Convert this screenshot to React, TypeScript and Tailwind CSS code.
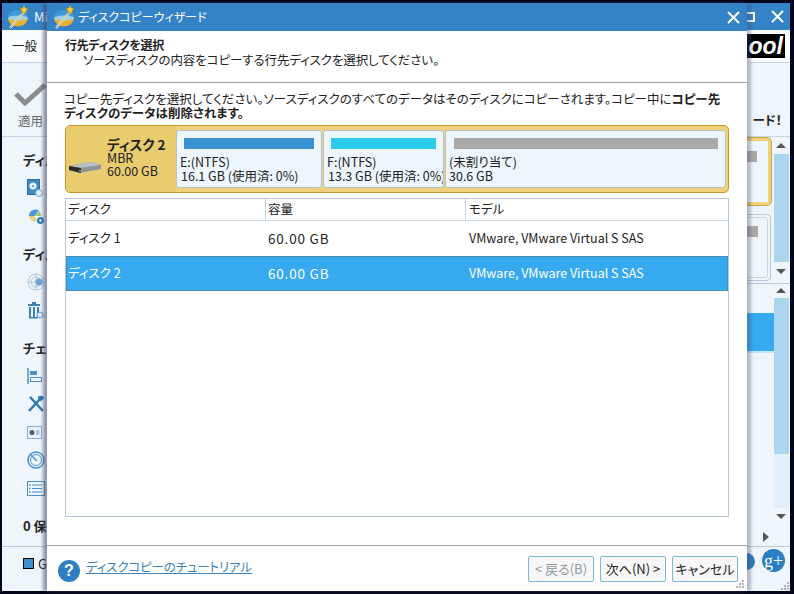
const jp = "font-['Noto_Sans_CJK_JP','Liberation_Sans',sans-serif] [font-feature-settings:'palt']";

function Wand() {
  return (
    <svg width="24" height="24" viewBox="0 0 24 24" className="shrink-0">
      <path d="M1 13a10 8 0 0 1 20 0z" fill="#3f9bd8" />
      <path d="M1 13a10 8.500 0 0 0 20 0z" fill="#e9b22c" />
      <path d="M1 13a10 2.500 0 0 1 20 0a10 2.500 0 0 1-20 0z" fill="#9fd0e8" />
      <path d="M3 23L17 7" stroke="#f4f0d8" strokeWidth="2" />
      <path d="M3 23L17 7" stroke="#7a6a30" strokeWidth="0.6" />
      <path d="M17 0l1.300 3 3 .8-2.400 2 .6 3-2.500-1.600-2.500 1.600.6-3-2.400-2 3-.8z" fill="#f5d23c" stroke="#9a7a10" strokeWidth="0.5" />
    </svg>
  );
}

function Hdd({ w = 34 }: { w?: number }) {
  return (
    <svg width={w} height="14" viewBox="0 0 34 14">
      <path d="M1 6L23 2L33 5V9L11 13L1 10Z" fill="#8d9396" />
      <path d="M1 6L11 8L33 5L23 2Z" fill="#b9bec0" />
      <path d="M1 6L13 8V13L1 10Z" fill="#2b2b2b" />
      <rect x="11" y="10" width="2" height="1.500" fill="#42c65a" />
    </svg>
  );
}

const Back = {
  Disk: () => (
    <svg width="16" height="18" viewBox="0 0 16 18">
      <rect x="0.500" y="0.500" width="12" height="15" fill="#3d87c4" stroke="#2b6ea8" />
      <circle cx="6" cy="7" r="3.600" fill="#e6f2fb" />
      <circle cx="6" cy="7" r="1" fill="#3d87c4" />
      <circle cx="12" cy="14" r="3.400" fill="#e7f2fa" stroke="#6aa7d6" />
    </svg>
  ),
  Pie: () => (
    <svg width="18" height="18" viewBox="0 0 18 18">
      <path d="M2 9a6.500 6.500 0 0 1 10-5.500L7.500 9z" fill="#4a95d6" />
      <path d="M2 9h5.500l3 5a6.500 6.500 0 0 1-8.500-5z" fill="#e7d27d" />
      <path d="M8 9l4.500-5 2 5z" fill="#9cc66b" />
      <circle cx="13.500" cy="13.500" r="3.500" fill="#2d7cc0" />
      <circle cx="13.500" cy="13.500" r="1.200" fill="#fff" />
    </svg>
  ),
  Globe: () => (
    <svg width="18" height="18" viewBox="0 0 18 18" fill="none" stroke="#a9c6de">
      <circle cx="9" cy="9" r="8" />
      <circle cx="9" cy="9" r="5" />
      <path d="M1 9h16M9 1v16" />
      <circle cx="12" cy="9" r="3.500" fill="#6ea5d2" stroke="none" />
    </svg>
  ),
  Trash: () => (
    <svg width="17" height="18" viewBox="0 0 17 18">
      <path d="M1 3h12v2H1zM5 1h4v2H5z" fill="#3b7fb8" />
      <path d="M2 6h2v10H2zM6 6h2v10H6zM10 6h2v7h-2zM2 16h9v1.500H2z" fill="#3b7fb8" />
      <circle cx="13" cy="14" r="3" fill="#dcebf7" stroke="#5a9bd0" />
    </svg>
  ),
  Align: () => (
    <svg width="15" height="16" viewBox="0 0 15 16" fill="none">
      <path d="M1 0v16" stroke="#4a8fc8" strokeWidth="1.500" />
      <rect x="3" y="3" width="7" height="4" fill="#4a8fc8" />
      <rect x="3.500" y="9.500" width="11" height="4" stroke="#4a8fc8" />
    </svg>
  ),
  Tools: () => (
    <svg width="18" height="18" viewBox="0 0 18 18" fill="none" stroke="#2f78b4" strokeWidth="2.500">
      <path d="M2 16L13 4" />
      <path d="M3 2l13 14" />
      <path d="M11 2a4 4 0 0 1 6 1l-3 3-2-1z" fill="#2f78b4" strokeWidth="0.500" />
    </svg>
  ),
  Card: () => (
    <svg width="15" height="13" viewBox="0 0 15 13">
      <rect x="0.500" y="0.500" width="14" height="12" fill="#eaf3fa" stroke="#7fb0d8" />
      <circle cx="5" cy="6.500" r="2.500" fill="#55585c" />
      <rect x="9" y="4" width="3.500" height="5" fill="#a9c6de" />
    </svg>
  ),
  Gauge: () => (
    <svg width="18" height="18" viewBox="0 0 18 18" fill="none" stroke="#4a8fc8">
      <circle cx="9" cy="9" r="8" strokeWidth="1.500" />
      <circle cx="9" cy="9" r="5.500" />
      <path d="M4 4l6 6" strokeWidth="1.500" />
    </svg>
  ),
  List: () => (
    <svg width="18" height="15" viewBox="0 0 18 15" fill="none" stroke="#4a8fc8">
      <rect x="0.500" y="0.500" width="17" height="14" />
      <path d="M5 4h10M5 7.500h10M5 11h10" />
      <path d="M2 4h1.500M2 7.500h1.500M2 11h1.500" strokeWidth="1.500" />
    </svg>
  ),
};

function Heading({ children, className = "" }: { children: string; className?: string }) {
  return (
    <div className={`h-7 flex items-center pl-[21px] text-[13px] font-bold text-[#222] whitespace-nowrap ${className}`}>{children}</div>
  );
}

function IconRow({ children }: { children: React.ReactNode }) {
  return <div className="h-7 flex items-center pl-[25px]">{children}</div>;
}

function Partition({ width, bar, barWidth, line1, line2, line2x }: { width: string; bar: string; barWidth: string; line1: string; line2: string; line2x: string }) {
  return (
    <div className={`${width} h-[58px] shrink-0 bg-[#edf6fc] border border-[#b7c3cc] rounded-[3px] pt-[7px] overflow-hidden text-[#222] text-[12.5px] leading-[13px] whitespace-nowrap`}>
      <div className={`${bar} ${barWidth} h-[11px] mx-auto`} />
      <div className="mt-[6px] pl-[3px]">{line1}</div>
      <div className={`${line2x} mt-px`}>{line2}</div>
    </div>
  );
}

function Btn({ children, disabled, width }: { children: string; disabled?: boolean; width: string }) {
  return (
    <button className={`${width} h-[26px] border border-[#7ab9d2] rounded-[2px] bg-[#f7f7f7] text-[13px] ${disabled ? "text-[#8f9aa1]" : "text-[#222]"}`}>
      {children}
    </button>
  );
}

function Grip() {
  return (
    <svg width="10" height="10" viewBox="0 0 10 10" fill="#b4b4b4">
      <rect x="7" y="1" width="2" height="2" />
      <rect x="4" y="4" width="2" height="2" />
      <rect x="7" y="4" width="2" height="2" />
      <rect x="1" y="7" width="2" height="2" />
      <rect x="4" y="7" width="2" height="2" />
      <rect x="7" y="7" width="2" height="2" />
    </svg>
  );
}

function Row({ cells, selected, height }: { cells: string[]; selected?: boolean; height: string }) {
  return (
    <div className={`flex ${height} items-center text-[12.5px] whitespace-nowrap ${selected ? "bg-[#36a9f0] text-white outline-1 outline-dotted outline-offset-[-1px] outline-[#5f6f7c]" : "text-[#222]"}`}>
      <div className="w-[200px] pl-[2px]">{cells[0]}</div>
      <div className="w-[200px] pl-[2px] text-[13.5px] tracking-[0.8px]">{cells[1]}</div>
      <div className="pl-[3px] flex-1">{cells[2]}</div>
    </div>
  );
}

function Arrow({ dir, className = "" }: { dir: "up" | "down"; className?: string }) {
  return (
    <div className={`flex justify-center pr-px ${className}`}>
      <div className={`w-0 h-0 border-l-[5px] border-r-[5px] border-l-transparent border-r-transparent ${dir === "up" ? "border-b-[5px] border-b-[#555]" : "border-t-[5px] border-t-[#555]"}`} />
    </div>
  );
}

export default function App() {
  return (
    <div className={`relative w-[794px] h-[594px] bg-[#02051a] overflow-hidden ${jp}`}>
      {/* back window */}
      <div className="absolute left-[2px] top-[3px] w-[788px] h-[588px] bg-[#eef6fc] flex flex-col overflow-hidden">
        <div className="h-[27px] shrink-0 bg-[#3483c7] flex items-center justify-between pl-[5px] pr-[5px] text-white">
          <div className="flex items-center gap-[3px] text-[13px]"><Wand /><span>Mi</span></div>
          <div className="flex items-center gap-[16px] pr-[1px]">
            <div className="w-[10px] h-[10px] border-2 border-white" />
            <svg width="13" height="13" viewBox="0 0 13 13" stroke="white" strokeWidth="2"><path d="M1 1l11 11M12 1L1 12" /></svg>
          </div>
        </div>
        <div className="h-[33px] shrink-0 bg-[#fafdff] border-b border-[#c5d7e6] flex items-center justify-between pl-[10px] pr-[5px] text-[12.5px] text-[#222]">
          <span>一般</span>
          <div className="bg-black text-white italic font-bold text-[23px] leading-[24px] w-[38px] text-right pr-[2px] font-['Liberation_Sans',sans-serif] overflow-hidden whitespace-nowrap">ool</div>
        </div>
        <div className="h-[74px] shrink-0 border-b border-[#c5d7e6] flex justify-between">
          <div className="pl-[12px] pt-[19px] flex flex-col">
            <svg width="33" height="24" viewBox="0 0 33 24" fill="none" stroke="#8c8c8c" strokeWidth="5"><path d="M2 12l9 9L31 3" /></svg>
            <span className="pl-[4px] mt-[6px] text-[12.5px] text-[#666]">適用</span>
          </div>
          <div className="flex flex-col items-end justify-end pb-[6px] pr-[8px] text-[12.5px] text-[#222] font-bold">ード！</div>
        </div>
        <div className="flex-1 flex justify-between min-h-0">
          <div className="pt-[9px] w-[60px]">
            <Heading>ディスク</Heading>
            <IconRow><Back.Disk /></IconRow>
            <IconRow><Back.Pie /></IconRow>
            <Heading className="mt-[10px]">ディスク</Heading>
            <IconRow><Back.Globe /></IconRow>
            <IconRow><Back.Trash /></IconRow>
            <Heading className="mt-[10px]">チェック</Heading>
            <IconRow><Back.Align /></IconRow>
            <IconRow><Back.Tools /></IconRow>
            <IconRow><Back.Card /></IconRow>
            <IconRow><Back.Gauge /></IconRow>
            <IconRow><Back.List /></IconRow>
            <Heading className="mt-[10px]">0 保留中</Heading>
          </div>
          <div className="w-[76px] flex">
            <div className="w-[60px] shrink-0 flex flex-col">
              <div className="h-[67px] mt-[1px] mr-[3px] border-[3px] border-[#efd27c] rounded-[4px] outline-1 outline-[#cfa53a] pt-[10px]">
                <div className="h-[11px] w-[40px] bg-[#a9a9a9]" />
              </div>
              <div className="h-[67px] mt-[9px] mr-[3px] border border-[#b7c8d8] rounded-[4px] p-[2px]">
                <div className="h-full border border-[#c8d6e2] rounded-[3px] pt-[8px]">
                  <div className="h-[11px] w-[40px] bg-[#a9a9a9]" />
                </div>
              </div>
              <div className="h-px mt-[2px] w-[76px] bg-[#b9cbdb]" />
              <div className="h-[40px] mt-[29px] bg-[#36a9f0] border-b-2 border-b-[#bfe6fb]" />
              <div className="mt-auto mb-[4px] mr-[5px] self-end w-0 h-0 border-t-[5px] border-b-[5px] border-l-[6px] border-t-transparent border-b-transparent border-l-[#555]" />
            </div>
            <div className="w-[16px] shrink-0 flex flex-col pr-px">
              <Arrow dir="up" className="mt-[6px]" />
              <div className="h-[108px] mt-[6px] bg-[#acd5f0]" />
              <Arrow dir="down" className="mt-[7px]" />
              <Arrow dir="up" className="mt-[14px]" />
              <div className="h-[156px] mt-[5px] bg-[#acd5f0]" />
              <div className="h-[54px] bg-[#e3eff8]" />
              <Arrow dir="down" className="mt-[6px]" />
            </div>
          </div>
        </div>
        <div className="h-[45px] shrink-0 border-t border-[#b9cbdb] flex justify-between items-start">
          <div className="flex items-center gap-[4px] pl-[21px] pt-[7px] text-[13px] text-[#222]">
            <div className="w-[11px] h-[11px] bg-[#3a8fd0] border border-black" />
            <span>GPT</span>
          </div>
          <div className="flex items-start gap-[7px] pt-[2px] pr-[5px]">
            <div className="w-[12px] h-[17px] mt-[4px] bg-[#2a7fc0] rounded-r-full" />
            <div className="w-[23px] h-[23px] rounded-full bg-[#2a7fc0] text-white flex items-center justify-center text-[18px] leading-none font-['Liberation_Serif',serif]">g+</div>
          </div>
        </div>
        <div className="absolute right-0 bottom-0"><Grip /></div>
      </div>

      {/* dialog */}
      <div className="absolute left-[47px] top-[3px] w-[700px] h-[588px] bg-white flex flex-col shadow-[-4px_0_3px_rgba(70,70,110,0.55),4px_0_3px_rgba(70,70,110,0.35)]">
        <div className="h-[28px] shrink-0 bg-[#3483c7] flex items-center justify-between pl-[6px] pr-[7px] text-white">
          <div className="flex items-center gap-[1px] text-[12px]"><Wand /><span>ディスクコピーウィザード</span></div>
          <svg width="13" height="13" viewBox="0 0 13 13" stroke="white" strokeWidth="2"><path d="M1 1l11 11M12 1L1 12" /></svg>
        </div>
        <div className="h-[52px] shrink-0 border-b border-[#a3a3a3] pl-[18px] pt-[6px] text-[12.5px] leading-[15px] text-[#222]">
          <div className="font-bold text-[12px] tracking-[-0.3px]">行先ディスクを選択</div>
          <div className="pl-[18px] tracking-[-0.1px]">ソースディスクの内容をコピーする行先ディスクを選択してください。</div>
        </div>
        <div className="flex-1 min-h-0 flex flex-col px-[18px] pt-[9px]">
          <div className="text-[12.5px] leading-[14px] text-[#222] -ml-px w-[665px]">
            コピー先ディスクを選択してください。ソースディスクのすべてのデータはそのディスクにコピーされます。コピー中に<b>コピー先</b>
            <br />
            <b>ディスクのデータは削除されます。</b>
          </div>
          <div className="mt-[5px] h-[68px] shrink-0 bg-[#f0d27a] border border-[#c9962a] rounded-[5px] flex">
            <div className="w-[110px] shrink-0 bg-[#e8cc6e] rounded-l-[5px] flex items-center pl-[2px] text-[#222] text-[12.5px] leading-[13px]">
              <div className="mt-[16px]"><Hdd /></div>
              <div className="pl-[5px] mt-[-4px]">
                <div className="font-bold text-[13.5px] leading-[14px] whitespace-nowrap">ディスク 2</div>
                <div>MBR</div>
                <div className="whitespace-nowrap">60.00 GB</div>
              </div>
            </div>
            <div className="flex gap-px pt-[4px]">
              <Partition width="w-[146px]" bar="bg-[#3a92d2]" barWidth="w-[130px]" line1="E:(NTFS)" line2="16.1 GB (使用済: 0%)" line2x="pl-[4px]" />
              <Partition width="w-[121px]" bar="bg-[#2bcbe9]" barWidth="w-[105px]" line1="F:(NTFS)" line2="13.3 GB (使用済: 0%)" line2x="pl-[4px]" />
              <Partition width="w-[281px]" bar="bg-[#a9a9a9]" barWidth="w-[264px]" line1="(未割り当て)" line2="30.6 GB" line2x="pl-[3px]" />
            </div>
          </div>
          <div className="mt-[5px] h-[319px] shrink-0 border border-[#b8c8d8]">
            <div className="flex h-[22px] border-b border-[#c5d3e0] items-center text-[12.5px] text-[#222]">
              <div className="w-[200px] h-full flex items-center pl-[2px] border-r border-[#c5d3e0]">ディスク</div>
              <div className="w-[200px] h-full flex items-center pl-[2px] border-r border-[#c5d3e0]">容量</div>
              <div className="pl-[3px]">モデル</div>
            </div>
            <Row height="h-[35px]" cells={["ディスク 1", "60.00 GB", "VMware, VMware Virtual S SAS"]} />
            <Row height="h-[35px]" selected cells={["ディスク 2", "60.00 GB", "VMware, VMware Virtual S SAS"]} />
          </div>
        </div>
        <div className="h-[46px] shrink-0 border-t border-[#a3a3a3] flex items-start justify-between pl-[11px] pr-[9px] relative">
          <div className="flex items-center gap-[6px] pt-[14px]">
            <div className="w-[22px] h-[22px] rounded-full bg-[#2d7fc1] text-white font-bold text-[16px] flex items-center justify-center font-['Liberation_Sans',sans-serif]">?</div>
            <a className="text-[12.5px] tracking-[-0.15px] text-[#3a83bd] underline -mt-[8px]">ディスクコピーのチュートリアル</a>
          </div>
          <div className="flex gap-[6px] pt-[10px]">
            <Btn width="w-[66px]" disabled>{"< 戻る(B)"}</Btn>
            <Btn width="w-[66px]">{"次へ(N) >"}</Btn>
            <Btn width="w-[66px]">キャンセル</Btn>
          </div>
          <div className="absolute right-[2px] bottom-[2px]"><Grip /></div>
        </div>
      </div>
    </div>
  );
}
